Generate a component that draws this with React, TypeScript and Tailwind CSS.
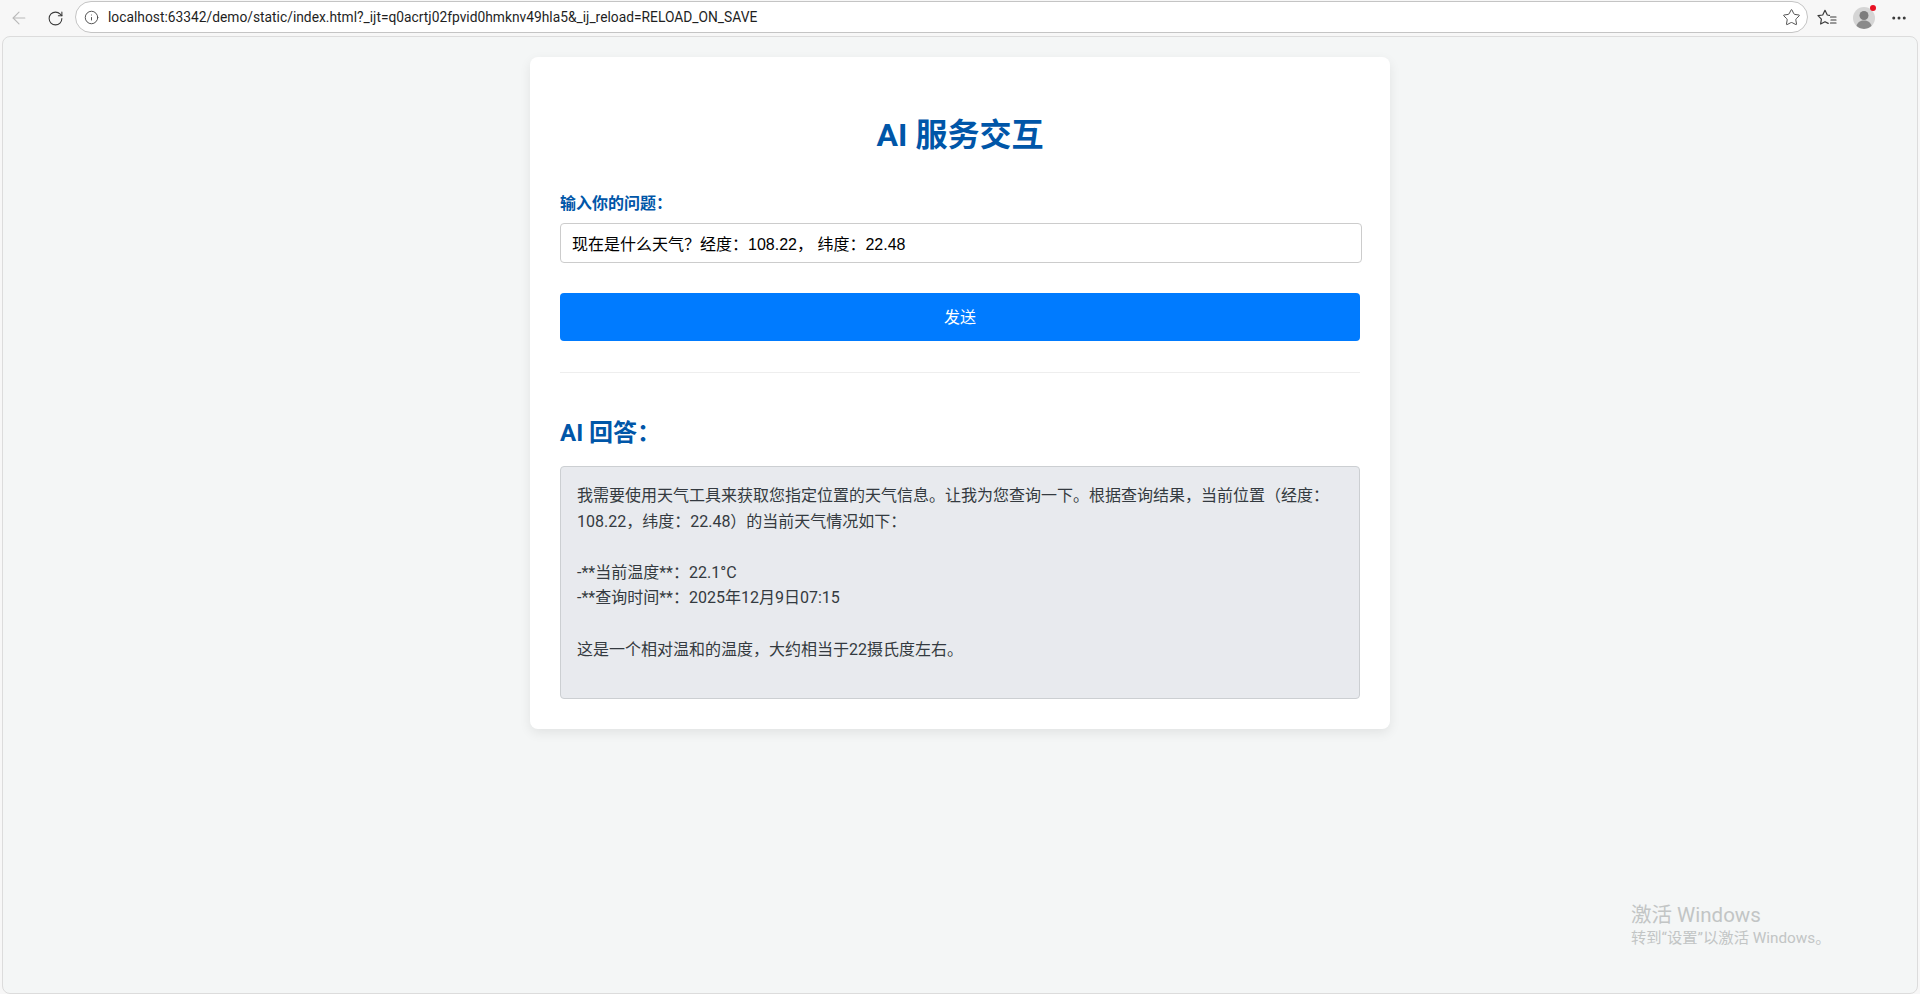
import { ArrowLeft, Ellipsis, Info, RotateCw, Star } from "lucide-react";

const uiFont = "font-['Roboto','Noto_Sans_CJK_SC',sans-serif]";
const inputFont = "font-['Liberation_Sans','Noto_Sans_CJK_SC',sans-serif]";

const answer = `我需要使用天气工具来获取您指定位置的天气信息。让我为您查询一下。根据查询结果，当前位置（经度：108.22，纬度：22.48）的当前天气情况如下：

-**当前温度**：22.1°C
-**查询时间**：2025年12月9日07:15

这是一个相对温和的温度，大约相当于22摄氏度左右。`;

function FavoritesIcon() {
  return (
    <svg width="20" height="20" viewBox="0 0 20 20" fill="none" stroke="#3a3a3a" strokeWidth="1.2" strokeLinejoin="round" strokeLinecap="round">
      <path d="M12.500 7.300L10.300 7 8 2.300 5.700 7 1 7.700l3.400 3.400-.8 4.900L8 13.700l3.200 1.700" />
      <path d="M13.500 9h5.500M14 12h5M13.500 15h5.500" />
    </svg>
  );
}

function Avatar() {
  return (
    <div className="relative w-[22px] h-[22px] rounded-full bg-[#d5d5d5] overflow-visible">
      <svg width="22" height="22" viewBox="0 0 22 22">
        <circle cx="11" cy="8.500" r="4.500" fill="#7d7d7d" />
        <path d="M3.500 19c1-4 4-5.500 7.500-5.500s6.500 1.500 7.500 5.500a11 11 0 0 1-15 0z" fill="#8a8a8a" />
      </svg>
      <span className="absolute top-[-2px] right-[-1px] w-[6px] h-[6px] rounded-full bg-[#e81123]" />
    </div>
  );
}

function BrowserBar() {
  return (
    <div className={`flex items-center h-[36px] pl-[9px] pr-[10px] bg-[#f7f7f7] ${uiFont}`}>
      <ArrowLeft className="w-5 h-5 text-[#b9b9b9]" strokeWidth={1.3} />
      <div className="w-[17px]" />
      <RotateCw className="w-[17px] h-[17px] text-[#3a3a3a] ml-[1px]" strokeWidth={1.5} />
      <div className="flex items-center w-[1733px] h-[32px] ml-[11px] mb-[2px] pl-[8px] pr-[6px] bg-white border border-[#c4c4c4] rounded-full">
        <Info className="w-[15px] h-[15px] text-[#4a4a4a]" strokeWidth={1.5} />
        <span className="ml-[9px] text-[13.800px] text-[#1f1f1f] whitespace-nowrap">
          localhost:63342/demo/static/index.html?_ijt=q0acrtj02fpvid0hmknv49hla5&_ij_reload=RELOAD_ON_SAVE
        </span>
        <Star className="w-[19px] h-[19px] ml-auto text-[#4a4a4a]" strokeWidth={1.2} />
      </div>
      <div className="flex items-center ml-[9px]">
        <FavoritesIcon />
        <div className="w-[16px]" />
        <Avatar />
        <div className="w-[15px]" />
        <Ellipsis className="w-[18px] h-[18px] text-[#3a3a3a]" strokeWidth={2} />
      </div>
    </div>
  );
}

export default function App() {
  return (
    <div className="h-[994px] bg-[#f7f7f7] flex flex-col overflow-hidden">
      <BrowserBar />
      <div className={`relative flex-1 mx-[2px] bg-[#f4f6f6] border border-[#dcdcdc] rounded-[8px] ${uiFont}`}>
        <div className="w-[860px] h-[672px] mt-[20px] ml-[527px] px-[30px] pt-[30px] bg-white rounded-[8px] shadow-[0_4px_12px_rgba(0,0,0,0.08)]">
          <h1 className="mt-[29px] text-center text-[32px] leading-[38px] font-bold text-[#0056a8]">AI 服务交互</h1>

          <label className="block mt-[40px] text-[16px] leading-[20px] font-bold text-[#0056a8]">输入你的问题：</label>
          <input
            readOnly
            value="现在是什么天气？经度：108.22， 纬度：22.48"
            className={`block w-[802px] h-[40px] mt-[9px] px-[11px] text-[16px] text-black bg-white border border-[#cccccc] rounded-[4px] outline-none ${inputFont}`}
          />

          <button className="block w-full h-[48px] mt-[30px] pt-[2px] text-[16px] text-white bg-[#007bff] rounded-[4px]">发送</button>

          <hr className="mt-[31px] border-0 border-t border-[#eeeeee]" />

          <h2 className="mt-[45px] text-[24px] leading-[30px] font-bold text-[#0056a8]">AI 回答：</h2>

          <div className="h-[233px] mt-[18px] pt-[16px] px-4 text-[16px] leading-[25.600px] text-[#343a40] bg-[#e8eaee] border border-[#cccfd2] rounded-[4px] whitespace-pre-wrap">
            {answer}
          </div>
        </div>

        <div className="absolute left-[1628px] top-[865px] text-[#c2c5c5]">
          <div className="text-[20.500px] leading-[26px]">激活 Windows</div>
          <div className="text-[15.300px] leading-[20px]">转到“设置”以激活 Windows。</div>
        </div>
      </div>
    </div>
  );
}
